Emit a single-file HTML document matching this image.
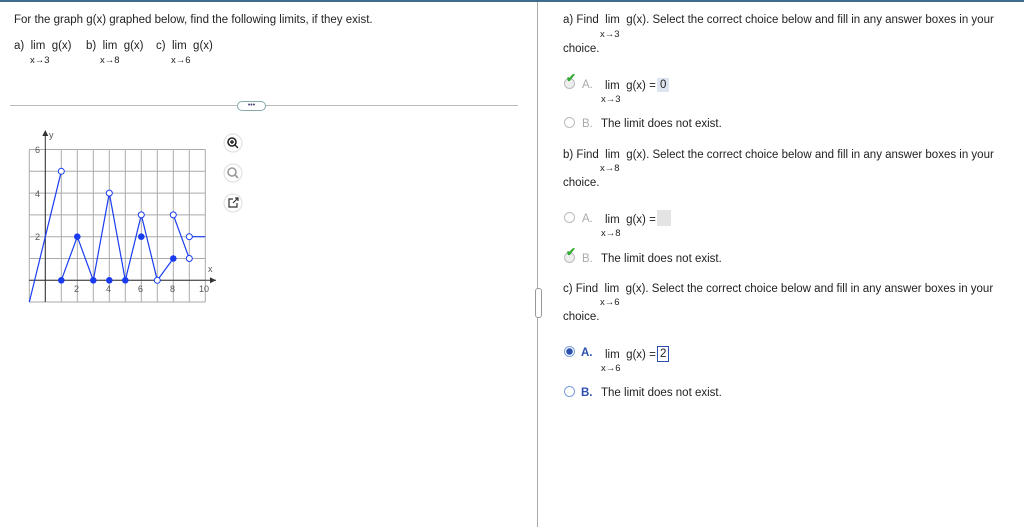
<!DOCTYPE html>
<html><head><meta charset="utf-8"><style>
body{margin:0;width:1024px;height:527px;background:#fff;position:relative;overflow:hidden;font-family:"Liberation Sans",Arial,sans-serif;font-size:11.5px;color:#222}
.t{position:absolute;white-space:nowrap;line-height:12px}
.s{font-size:9.5px}
.top{position:absolute;left:0;top:0;width:1024px;height:2px;background:#3d6d8a}
.rad{position:absolute;width:9px;height:9px;border:1px solid #bbb;border-radius:50%}
.g{color:#aaa}
.bl{color:#2a4fb0;font-weight:bold}
</style></head><body>
<div class="top"></div>
<div class="t" style="left:14px;top:14px">For the graph g(x) graphed below, find the following limits, if they exist.</div>
<div class="t" style="left:14px;top:40px">a)&nbsp; lim&nbsp; g(x)</div>
<div class="t s" style="left:30px;top:55px">x→3</div>
<div class="t" style="left:86px;top:40px">b)&nbsp; lim&nbsp; g(x)</div>
<div class="t s" style="left:100px;top:55px">x→8</div>
<div class="t" style="left:156px;top:40px">c)&nbsp; lim&nbsp; g(x)</div>
<div class="t s" style="left:171px;top:55px">x→6</div>
<div style="position:absolute;left:10px;top:105px;width:508px;height:1px;background:#bbb"></div>
<div style="position:absolute;left:237px;top:101px;width:27px;height:8px;border:1px solid #8aa;border-radius:5px;background:#fff;font-size:7px;line-height:7px;text-align:center;color:#447">•••</div>
<div style="position:absolute;left:537px;top:2px;width:1px;height:525px;background:#aaa"></div>
<div style="position:absolute;left:535px;top:288px;width:5px;height:28px;border:1px solid #999;border-radius:3px;background:#fff"></div>

<svg style="position:absolute;left:0;top:0" width="530" height="320">
<g stroke="#aaa" stroke-width="1" fill="none">
<path d="M29.3 149.5V302M45.3 149.5V302M61.3 149.5V302M77.3 149.5V302M93.3 149.5V302M109.3 149.5V302M125.3 149.5V302M141.3 149.5V302M157.3 149.5V302M173.3 149.5V302M189.3 149.5V302M205.3 149.5V302"/>
<path d="M29.3 149.5H205.3M29.3 171.3H205.3M29.3 193.1H205.3M29.3 214.9H205.3M29.3 236.7H205.3M29.3 258.5H205.3M29.3 280.3H205.3M29.3 302H205.3"/>
</g>
<g stroke="#333" stroke-width="1"><path d="M29 280.3H216M45.3 302V135"/></g>
<path d="M216 280.3l-6 -3v6z M45.3 130l-3 6h6z" fill="#333"/>
<g font-size="9" fill="#555" font-family="Liberation Sans,sans-serif">
<text x="35" y="153">6</text><text x="35" y="197">4</text><text x="35" y="240">2</text>
<text x="74" y="292">2</text><text x="106" y="292">4</text><text x="138" y="292">6</text><text x="170" y="292">8</text><text x="199" y="292">10</text>
<text x="49" y="138">y</text><text x="208" y="272">x</text></g>
<g stroke="#1a3cf0" stroke-width="1.2" fill="none">
<path d="M29.3 302.1L61.3 171.3"/>
<path d="M61.3 280.3L77.3 236.7L93.3 280.3L109.3 193.1L125.3 280.3L141.3 214.9L157.3 280.3L173.3 258.5"/>
<path d="M173.3 214.9L189.3 258.5M189.3 236.7H205.3"/>
</g>
<g fill="#1a3cf0"><circle cx="61.3" cy="280.3" r="3.3"/><circle cx="77.3" cy="236.7" r="3.3"/><circle cx="93.3" cy="280.3" r="3.3"/><circle cx="109.3" cy="280.3" r="3.3"/><circle cx="125.3" cy="280.3" r="3.3"/><circle cx="141.3" cy="236.7" r="3.3"/><circle cx="173.3" cy="258.5" r="3.3"/></g>
<g fill="#fff" stroke="#1a3cf0" stroke-width="1"><circle cx="61.3" cy="171.3" r="3"/><circle cx="109.3" cy="193.1" r="3"/><circle cx="141.3" cy="214.9" r="3"/><circle cx="157.3" cy="280.3" r="3"/><circle cx="173.3" cy="214.9" r="3"/><circle cx="189.3" cy="258.5" r="3"/><circle cx="189.3" cy="236.7" r="3"/></g>
<g><circle cx="233" cy="143" r="9" fill="#fff" stroke="#ddd"/><circle cx="232" cy="142" r="4" fill="none" stroke="#222" stroke-width="1.6"/><path d="M235 145l3 3M230 142h4M232 140v4" stroke="#222" stroke-width="1.4"/>
<circle cx="233" cy="173" r="9" fill="#fff" stroke="#ddd"/><circle cx="232" cy="172" r="4" fill="none" stroke="#999" stroke-width="1.6"/><path d="M235 175l3 3" stroke="#999" stroke-width="1.6"/>
<circle cx="233" cy="203" r="9" fill="#fff" stroke="#ddd"/><path d="M233 199h-4v8h8v-4M233 203l5-5M235 198h3v3" stroke="#333" stroke-width="1.2" fill="none"/></g>
</svg>

<!-- a -->
<div class="t" style="left:563px;top:14px">a) Find&nbsp; lim&nbsp; g(x). Select the correct choice below and fill in any answer boxes in your</div>
<div class="t s" style="left:600px;top:29px">x→3</div>
<div class="t" style="left:563px;top:43px">choice.</div>
<div class="rad" style="left:564px;top:78px;background:#eee"></div>
<div class="t" style="left:566px;top:72px;color:#3a3;font-size:12px;font-weight:bold">✔</div>
<div class="t g" style="left:582px;top:79px">A.</div>
<div class="t" style="left:605px;top:80px">lim&nbsp; g(x) =</div>
<div class="t" style="left:657px;top:78px;background:#dde6f0;padding:1px 3px">0</div>
<div class="t s" style="left:601px;top:94px">x→3</div>
<div class="rad" style="left:564px;top:117px"></div>
<div class="t g" style="left:582px;top:118px">B.</div>
<div class="t" style="left:601px;top:118px">The limit does not exist.</div>
<!-- b -->
<div class="t" style="left:563px;top:149px">b) Find&nbsp; lim&nbsp; g(x). Select the correct choice below and fill in any answer boxes in your</div>
<div class="t s" style="left:600px;top:163px">x→8</div>
<div class="t" style="left:563px;top:177px">choice.</div>
<div class="rad" style="left:564px;top:212px"></div>
<div class="t g" style="left:582px;top:213px">A.</div>
<div class="t" style="left:605px;top:214px">lim&nbsp; g(x) =</div>
<div style="position:absolute;left:657px;top:210px;width:14px;height:16px;background:#e4e4e4"></div>
<div class="t s" style="left:601px;top:228px">x→8</div>
<div class="rad" style="left:564px;top:252px;background:#eee"></div>
<div class="t" style="left:566px;top:246px;color:#3a3;font-size:12px;font-weight:bold">✔</div>
<div class="t g" style="left:582px;top:253px">B.</div>
<div class="t" style="left:601px;top:253px">The limit does not exist.</div>
<!-- c -->
<div class="t" style="left:563px;top:283px">c) Find&nbsp; lim&nbsp; g(x). Select the correct choice below and fill in any answer boxes in your</div>
<div class="t s" style="left:600px;top:297px">x→6</div>
<div class="t" style="left:563px;top:311px">choice.</div>
<div class="rad" style="left:564px;top:346px;border-color:#7b9ee0;background:radial-gradient(circle,#2a4fb0 0 3px,#fff 3.5px)"></div>
<div class="t bl" style="left:581px;top:347px">A.</div>
<div class="t" style="left:605px;top:349px">lim&nbsp; g(x) =</div>
<div class="t" style="left:657px;top:346px;border:1px solid #2a4fb0;padding:1px 2px">2</div>
<div class="t s" style="left:601px;top:363px">x→6</div>
<div class="rad" style="left:564px;top:386px;border-color:#7b9ee0"></div>
<div class="t bl" style="left:581px;top:387px">B.</div>
<div class="t" style="left:601px;top:387px">The limit does not exist.</div>
</body></html>
